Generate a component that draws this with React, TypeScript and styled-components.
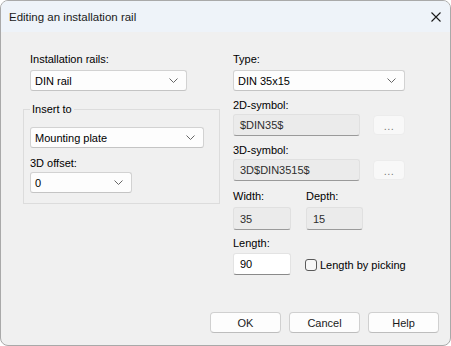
import styled, { createGlobalStyle } from "styled-components";

const Global = createGlobalStyle`
  html, body {
    margin: 0;
    padding: 0;
    background: #ffffff;
  }
  body {
    font-family: "Liberation Sans", Arial, sans-serif;
    font-size: 11px;
    color: #000;
  }
`

const Window = styled.div`
  width: 451px;
  height: 346px;
  box-sizing: border-box;
  border: 1px solid #a9a9a9;
  border-radius: 8px;
  overflow: hidden;
  display: flex;
  flex-direction: column;
  background: #f0f0f0;
`

const TitleBar = styled.div`
  height: 31px;
  flex: none;
  display: flex;
  align-items: center;
  justify-content: space-between;
  padding: 0 9px 0 8px;
  background: #eef3f9;
`

const Title = styled.span`
  font-size: 11.5px;
  color: #1a1a1a;
  margin-top: 1px;
`

const Close = styled.div`
  width: 10px;
  height: 10px;
  display: flex;
  margin-top: 1px;
`

const Body = styled.div`
  flex: 1;
  display: flex;
  flex-direction: column;
`

const Columns = styled.div`
  flex: 1;
  display: flex;
  gap: 13px;
  padding: 20px 0 0 22px;
`

const LeftColumn = styled.div`
  width: 197px;
  display: flex;
  flex-direction: column;
`

const RightColumn = styled.div`
  width: 172px;
  display: flex;
  flex-direction: column;
`

const Label = styled.div<{ $top?: number; $indent?: number }>`
  line-height: 14px;
  height: 14px;
  margin-top: ${(p) => p.$top ?? 0}px;
  margin-left: ${(p) => p.$indent ?? 0}px;
  white-space: nowrap;
`

const Combo = styled.div<{ $width: number; $top?: number; $indent?: number }>`
  width: ${(p) => p.$width}px;
  height: 21px;
  box-sizing: border-box;
  margin-top: ${(p) => p.$top ?? 0}px;
  margin-left: ${(p) => p.$indent ?? 0}px;
  display: flex;
  align-items: center;
  justify-content: space-between;
  padding: 0 8px 0 4px;
  background: #fdfdfd;
  border: 1px solid #d2d2d2;
  border-bottom-color: #c4c4c4;
  border-radius: 3px;
`

const Group = styled.fieldset`
  margin: 11px 0 0 0;
  padding: 11px 6px 10px 6px;
  border: 1px solid #dcdcdc;
  border-radius: 0;
  display: flex;
  flex-direction: column;
  min-width: 0;
`

const Legend = styled.legend`
  line-height: 14px;
  padding: 0 2px;
  margin-left: 0px;
`

const Row = styled.div<{ $top?: number; $gap: number; $align?: string }>`
  display: flex;
  align-items: ${(p) => p.$align ?? "center"};
  gap: ${(p) => p.$gap}px;
  margin-top: ${(p) => p.$top ?? 0}px;
`

const Field = styled.div<{ $width: number; $height: number; $disabled?: boolean; $top?: number }>`
  width: ${(p) => p.$width}px;
  height: ${(p) => p.$height}px;
  flex: none;
  box-sizing: border-box;
  margin-top: ${(p) => p.$top ?? 0}px;
  display: flex;
  align-items: center;
  padding: 0 6px;
  background: ${(p) => (p.$disabled ? "#ebebeb" : "#ffffff")};
  color: ${(p) => (p.$disabled ? "#2e2e2e" : "#000")};
  border: 1px solid ${(p) => (p.$disabled ? "#e0e0e0" : "#e3e3e3")};
  border-bottom-color: ${(p) => (p.$disabled ? "#9a9a9a" : "#8a8a8a")};
  border-radius: 3px;
`

const Ellipsis = styled.div`
  width: 32px;
  height: 20px;
  flex: none;
  box-sizing: border-box;
  display: flex;
  align-items: center;
  justify-content: center;
  background: #f8f8f8;
  border: 1px solid #ececec;
  border-radius: 4px;
  color: #7a7a7a;
  font-size: 11px;
  letter-spacing: 0.5px;
  padding-top: 2px;
`

const Column = styled.div`
  display: flex;
  flex-direction: column;
`

const CheckRow = styled.label`
  display: flex;
  align-items: center;
  gap: 3px;
  margin-top: 2px;
  white-space: nowrap;
`

const Box = styled.span`
  width: 12px;
  height: 12px;
  flex: none;
  box-sizing: border-box;
  border: 1px solid #5a5a5a;
  border-radius: 3px;
  background: #f7f7f7;
`

const Footer = styled.div`
  display: flex;
  justify-content: flex-end;
  gap: 8px;
  padding: 0 11px 12px 0;
`

const Button = styled.div`
  width: 71px;
  height: 21px;
  box-sizing: border-box;
  display: flex;
  align-items: center;
  justify-content: center;
  background: #fdfdfd;
  border: 1px solid #d0d0d0;
  border-bottom-color: #bdbdbd;
  border-radius: 4px;
  color: #1a1a1a;
`

function Chevron() {
  return (
    <svg width="9" height="5" viewBox="0 0 9 5">
      <path d="M0.5 0.5 L4.5 4.5 L8.5 0.5" fill="none" stroke="#666" strokeWidth="1" />
    </svg>
  );
}

function ComboBox({ value, width, top, indent }: { value: string; width: number; top?: number; indent?: number }) {
  return (
    <Combo $width={width} $top={top} $indent={indent}>
      <span>{value}</span>
      <Chevron />
    </Combo>
  );
}

export default function App() {
  return (
    <>
      <Global />
      <Window>
        <TitleBar>
          <Title>Editing an installation rail</Title>
          <Close>
            <svg width="10" height="10" viewBox="0 0 10 10">
              <path d="M0.5 0.5 L9.5 9.5 M9.5 0.5 L0.5 9.5" stroke="#1a1a1a" strokeWidth="1.1" />
            </svg>
          </Close>
        </TitleBar>
        <Body>
          <Columns>
            <LeftColumn>
              <Label $indent={7}>Installation rails:</Label>
              <ComboBox value="DIN rail" width={157} top={4} indent={7} />
              <Group>
                <Legend>Insert to</Legend>
                <ComboBox value="Mounting plate" width={174} />
                <Label $top={8}>3D offset:</Label>
                <ComboBox value="0" width={102} top={2} />
              </Group>
            </LeftColumn>
            <RightColumn>
              <Label>Type:</Label>
              <ComboBox value="DIN 35x15" width={172} top={4} />
              <Label $top={7}>2D-symbol:</Label>
              <Row $top={2} $gap={13}>
                <Field $width={127} $height={22} $disabled>$DIN35$</Field>
                <Ellipsis>...</Ellipsis>
              </Row>
              <Label $top={7}>3D-symbol:</Label>
              <Row $top={2} $gap={13}>
                <Field $width={127} $height={22} $disabled>3D$DIN3515$</Field>
                <Ellipsis>...</Ellipsis>
              </Row>
              <Row $top={8} $gap={15} $align="flex-start">
                <Column>
                  <Label>Width:</Label>
                  <Field $width={58} $height={23} $disabled $top={4}>35</Field>
                </Column>
                <Column>
                  <Label>Depth:</Label>
                  <Field $width={57} $height={23} $disabled $top={4}>15</Field>
                </Column>
              </Row>
              <Label $top={6}>Length:</Label>
              <Row $top={3} $gap={14}>
                <Field $width={58} $height={22}>90</Field>
                <CheckRow>
                  <Box />
                  <span>Length by picking</span>
                </CheckRow>
              </Row>
            </RightColumn>
          </Columns>
          <Footer>
            <Button>OK</Button>
            <Button>Cancel</Button>
            <Button>Help</Button>
          </Footer>
        </Body>
      </Window>
    </>
  );
}
